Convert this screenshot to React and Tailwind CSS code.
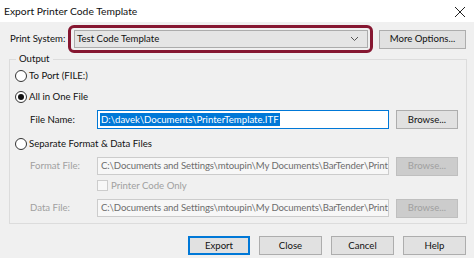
import React from "react";

function Radio({ checked }) {
  return (
    <span className="w-[12px] h-[12px] rounded-full border border-[#333] bg-white flex items-center justify-center shrink-0">
      {checked && <span className="w-[6px] h-[6px] rounded-full bg-[#111]" />}
    </span>
  );
}

function Btn({ children, disabled, def, w = "w-[62px]" }) {
  return (
    <div
      className={`${w} h-[19px] flex items-center justify-center whitespace-nowrap ${
        disabled
          ? "bg-[#cccccc] border border-[#bfbfbf] text-[#a0a0a0]"
          : def
          ? "bg-[#e1e1e1] border-2 border-[#0078d7] text-[#111]"
          : "bg-[#e1e1e1] border border-[#adadad] text-[#111]"
      }`}
    >
      {children}
    </div>
  );
}

export default function App() {
  return (
    <div className="w-[474px] h-[263px] bg-white flex flex-col font-['Lato',sans-serif] text-[9.6px] text-[#111] leading-none overflow-hidden">
      <div className="h-[22px] flex items-center justify-between pl-[4px] pr-[8px] bg-white">
        <span className="text-[10.3px] text-[#111]">Export Printer Code Template</span>
        <svg width="12" height="12" viewBox="0 0 12 12" className="mt-[1px]">
          <path d="M1 1 L11 11 M11 1 L1 11" stroke="#222" strokeWidth="1" />
        </svg>
      </div>
      <div className="flex-1 bg-[#f0f0f0] flex flex-col pl-[9px] pr-[7px]">
        <div className="flex items-center mt-[3px] h-[28px]">
          <span className="ml-[1px] w-[58px] whitespace-nowrap">Print System:</span>
          <div className="w-[305px] h-[28px] border-[3px] border-[#861731] rounded-[6px] p-[2px] pl-[3px]">
            <div className="h-full bg-[#e5e5e5] border border-[#acacac] flex items-center justify-between pl-[2px] pr-[8px]">
              <span>Test Code Template</span>
              <svg width="9" height="6" viewBox="0 0 9 6">
                <path d="M1 1 L4.5 4.5 L8 1" stroke="#555" fill="none" strokeWidth="1" />
              </svg>
            </div>
          </div>
          <div className="ml-[6px]">
            <Btn w="w-[87px]">More Options...</Btn>
          </div>
        </div>
        <fieldset className="border border-[#dcdcdc] px-[5px] pb-[6px] flex flex-col">
          <legend className="px-[3px] ml-[1px] leading-[12px]">Output</legend>
          <div className="flex items-center gap-[2px] mt-[5px] h-[12px]">
            <Radio />
            <span>To Port (FILE:)</span>
          </div>
          <div className="flex items-center gap-[2px] mt-[9px] h-[12px]">
            <Radio checked />
            <span>All in One File</span>
          </div>
          <div className="flex items-center mt-[7px] h-[19px]">
            <span className="w-[82px] pl-[15px] whitespace-nowrap">File Name:</span>
            <div className="w-[292px] h-[19px] bg-white border border-[#0078d7] flex items-center pl-[2px]">
              <span className="bg-[#0078d7] text-white px-[1px] py-[2px]">D:\davek\Documents\PrinterTemplate.ITF</span>
            </div>
            <div className="ml-[7px]">
              <Btn>Browse...</Btn>
            </div>
          </div>
          <div className="flex items-center gap-[2px] mt-[9px] h-[12px]">
            <Radio />
            <span>Separate Format &amp; Data Files</span>
          </div>
          <div className="flex items-center mt-[7px] h-[18px]">
            <span className="w-[82px] pl-[15px] text-[#a0a0a0] whitespace-nowrap">Format File:</span>
            <div className="w-[292px] h-[18px] bg-[#f7f7f7] border border-[#cccccc] flex items-center pl-[3px] text-[#6d6d6d] overflow-hidden">
              <span className="whitespace-nowrap tracking-[-0.12px]">C:\Documents and Settings\mtoupin\My Documents\BarTender\Print</span>
            </div>
            <div className="ml-[7px]">
              <Btn disabled>Browse...</Btn>
            </div>
          </div>
          <div className="flex items-center gap-[3px] mt-[5px] h-[11px] ml-[82px]">
            <span className="w-[11px] h-[11px] border border-[#cccccc] bg-[#f7f7f7]" />
            <span className="text-[#a0a0a0]">Printer Code Only</span>
          </div>
          <div className="flex items-center mt-[8px] h-[18px]">
            <span className="w-[82px] pl-[15px] text-[#a0a0a0] whitespace-nowrap">Data File:</span>
            <div className="w-[292px] h-[18px] bg-[#f7f7f7] border border-[#cccccc] flex items-center pl-[3px] text-[#6d6d6d] overflow-hidden">
              <span className="whitespace-nowrap tracking-[-0.12px]">C:\Documents and Settings\mtoupin\My Documents\BarTender\Print</span>
            </div>
            <div className="ml-[7px]">
              <Btn disabled>Browse...</Btn>
            </div>
          </div>
        </fieldset>
        <div className="flex justify-end gap-[9px] mt-[12px] pr-[1px]">
          <Btn def>Export</Btn>
          <Btn w="w-[63px]">Close</Btn>
          <Btn w="w-[63px]">Cancel</Btn>
          <Btn w="w-[63px]">Help</Btn>
        </div>
      </div>
      <div className="h-[5px] bg-white" />
    </div>
  );
}
